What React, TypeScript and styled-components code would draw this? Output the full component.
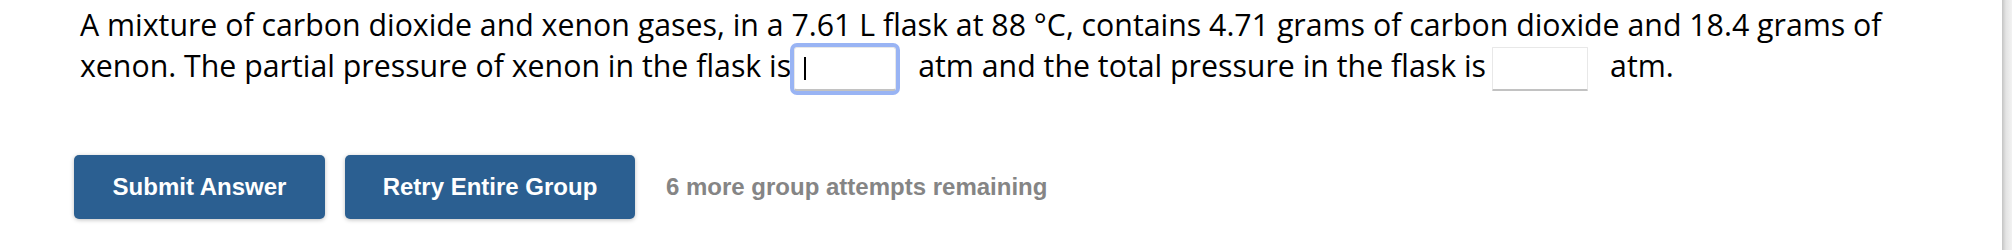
import React from 'react';
import styled, { createGlobalStyle } from 'styled-components';

const GlobalStyle = createGlobalStyle`
    html, body {
        margin: 0;
        padding: 0;
        background: #ffffff;
    }
`;

const Page = styled.div`
    display: flex;
    width: 2012px;
    height: 250px;
    overflow: hidden;
    background: #ffffff;
`;

const Card = styled.div`
    width: 2002px;
    height: 250px;
    box-sizing: border-box;
    padding: 4px 0 0 80px;
    background: #ffffff;
`;

const Gutter = styled.div`
    width: 10px;
    height: 250px;
    background: linear-gradient(to right, #c4c4c4, #e4e4e4 40%, #f2f2f2);
`;

const Question = styled.p`
    margin: 0;
    width: 1840px;
    font-family: 'Open Sans', 'Noto Sans', sans-serif;
    font-size: 30.3px;
    line-height: 41px;
    color: #000000;
`;

const AnswerBox = styled.span<{ $focused?: boolean }>`
    display: inline-flex;
    align-items: center;
    box-sizing: border-box;
    width: ${(p) => (p.$focused ? '102px' : '96px')};
    height: 44px;
    margin: -4px 22px -4px ${(p) => (p.$focused ? '3px' : '6px')};
    padding-left: 9px;
    vertical-align: middle;
    background: #ffffff;
    border: 1px solid #e8e8e8;
    border-bottom: 2px solid #c2c2c2;
    box-shadow: ${(p) => (p.$focused ? '0 0 0 4px #99b4f4' : 'none')};
    border-radius: ${(p) => (p.$focused ? '3px' : '1px')};
`;

const Caret = styled.span`
    display: block;
    width: 2px;
    height: 23px;
    background: #000000;
`;

const Actions = styled.div`
    display: flex;
    align-items: center;
    gap: 20px;
    margin-top: 68px;
    margin-left: -6px;
`;

const Button = styled.button<{ $width: number }>`
    width: ${(p) => p.$width}px;
    height: 64px;
    padding: 0;
    border: none;
    border-radius: 5px;
    background: #2b5f91;
    color: #ffffff;
    font-family: 'Liberation Sans', Arial, sans-serif;
    font-weight: bold;
    font-size: 24px;
    box-shadow: 0 1px 4px rgba(0, 0, 0, 0.25);
    cursor: pointer;
`;

const Attempts = styled.span`
    margin-left: 11px;
    font-family: 'Liberation Sans', Arial, sans-serif;
    font-weight: bold;
    font-size: 24px;
    color: #858585;
`;

export default function App() {
    return (
        <>
            <GlobalStyle />
            <Page>
                <Card>
                    <Question>
                        A mixture of carbon dioxide and xenon gases, in a 7.61 L flask at 88 °C, contains 4.71 grams of carbon dioxide and 18.4 grams of xenon. The partial pressure of xenon in the flask is
                        <AnswerBox $focused>
                            <Caret />
                        </AnswerBox>
                        atm and the total pressure in the flask is
                        <AnswerBox />
                        atm.
                    </Question>
                    <Actions>
                        <Button $width={251}>Submit Answer</Button>
                        <Button $width={290}>Retry Entire Group</Button>
                        <Attempts>6 more group attempts remaining</Attempts>
                    </Actions>
                </Card>
                <Gutter />
            </Page>
        </>
    );
}
